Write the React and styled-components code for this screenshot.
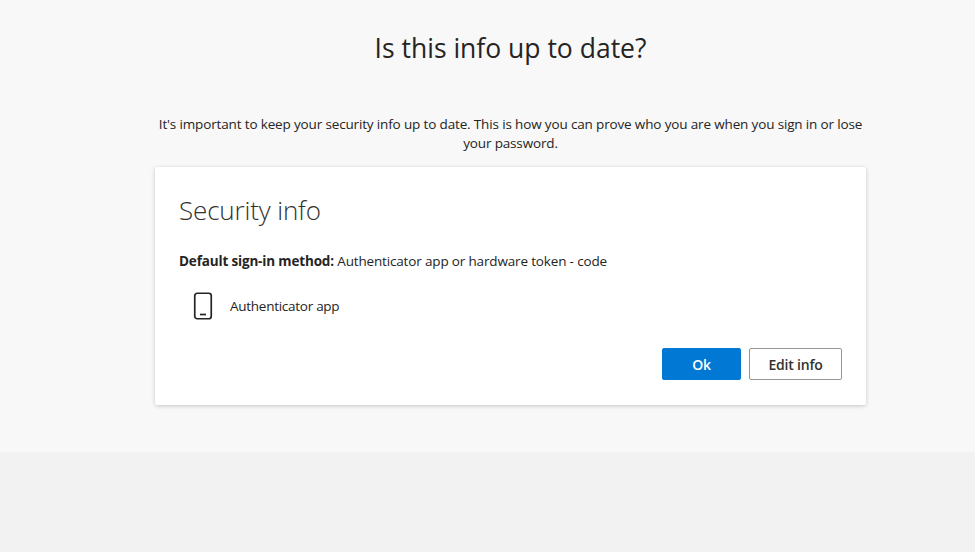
import styled, { createGlobalStyle } from "styled-components";

const GlobalStyle = createGlobalStyle`
  html, body {
    margin: 0;
    padding: 0;
    background: #f2f2f2;
    font-family: "Open Sans", "Noto Sans", sans-serif;
    color: #252423;
  }
`;

const Top = styled.div`
  height: 452px;
  background: #f8f8f8;
  display: flex;
  flex-direction: column;
  align-items: center;
  box-sizing: border-box;
  padding: 28px 0 0 46px;
`;

const Title = styled.h1`
  margin: 0;
  font-size: 26.5px;
  font-weight: 400;
  line-height: 40px;
`;

const Intro = styled.p`
  margin: 47px 0 0;
  width: 711px;
  font-size: 13.5px;
  line-height: 19px;
  text-align: center;
  letter-spacing: -0.15px;
`;

const Card = styled.section`
  width: 711px;
  height: 238px;
  margin-top: 14px;
  box-sizing: border-box;
  padding: 23px 24px 25px;
  background: #fff;
  border-radius: 2px;
  box-shadow: 0 1px 4px rgba(0, 0, 0, 0.2);
  display: flex;
  flex-direction: column;
`;

const CardTitle = styled.h2`
  margin: 0;
  font-size: 26px;
  font-weight: 300;
  line-height: 40px;
  color: #323130;
  letter-spacing: -0.15px;
`;

const DefaultLine = styled.div`
  margin-top: 21px;
  font-size: 13.5px;
  line-height: 20px;
  letter-spacing: -0.16px;

  b {
    font-weight: 700;
  }
`;

const Method = styled.div`
  display: flex;
  align-items: center;
  gap: 17px;
  margin-top: 21px;
  padding-left: 14px;
  font-size: 13.5px;
  letter-spacing: -0.27px;
`;

const Actions = styled.div`
  display: flex;
  justify-content: flex-end;
  gap: 8px;
  margin-top: auto;
`;

const Button = styled.button`
  height: 32px;
  width: ${(p) => (p.$primary ? "79px" : "93px")};
  box-sizing: border-box;
  border: 1px solid ${(p) => (p.$primary ? "#0078d4" : "#949494")};
  border-radius: 2px;
  background: ${(p) => (p.$primary ? "#0078d4" : "#fff")};
  color: ${(p) => (p.$primary ? "#fff" : "#323130")};
  font-family: inherit;
  font-size: 14px;
  font-weight: 600;
  letter-spacing: -0.2px;
  padding: 0;
`;

const Bottom = styled.div`
  height: 100px;
  background: #f2f2f2;
`;

function PhoneIcon() {
  return (
    <svg width="20" height="28" viewBox="0 0 20 28" fill="none">
      <rect x="1.75" y="1.25" width="16.5" height="25.5" rx="2.5" stroke="#252423" strokeWidth="1.7" />
      <path d="M7 22.5h6" stroke="#252423" strokeWidth="1.7" />
    </svg>
  );
}

function App() {
  return (
    <>
      <GlobalStyle />
      <Top>
        <Title>Is this info up to date?</Title>
        <Intro>
          It's important to keep your security info up to date. This is how you can prove who you are when you sign in or lose your password.
        </Intro>
        <Card>
          <CardTitle>Security info</CardTitle>
          <DefaultLine>
            <b>Default sign-in method:</b> Authenticator app or hardware token - code
          </DefaultLine>
          <Method>
            <PhoneIcon />
            <span>Authenticator app</span>
          </Method>
          <Actions>
            <Button $primary>Ok</Button>
            <Button>Edit info</Button>
          </Actions>
        </Card>
      </Top>
      <Bottom />
    </>
  );
}

export default App;
